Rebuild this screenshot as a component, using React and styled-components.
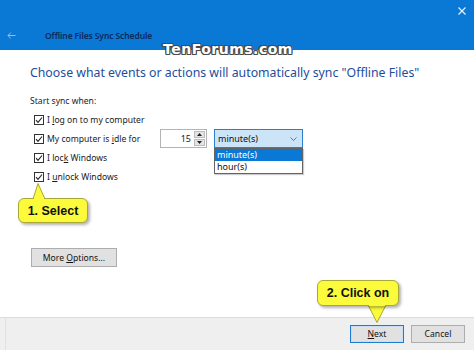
import React from "react";
import styled, { createGlobalStyle } from "styled-components";

const Global = createGlobalStyle`
  html, body { margin: 0; padding: 0; background: #fff; }
  body { font-family: "Noto Sans", "Open Sans", sans-serif; }
`;

const Frame = styled.div`
  position: relative;
  width: 474px;
  height: 350px;
  overflow: hidden;
  display: flex;
  flex-direction: column;
  background: #fff;
`;

const Header = styled.header`
  height: 50px;
  background: #0a78d5;
  display: flex;
  flex-direction: column;
  flex-shrink: 0;
`;

const TopBar = styled.div`
  height: 22px;
  display: flex;
  justify-content: flex-end;
  align-items: center;
  padding-right: 8px;
  color: #e8f2fc;
`;

const TitleBar = styled.div`
  height: 26px;
  display: flex;
  align-items: center;
  padding-left: 7px;
  gap: 29px;
`;

const Title = styled.span`
  font-size: 8.5px;
  font-weight: 600;
  color: #0c2a5e;
  letter-spacing: -0.1px;
`;

const Watermark = styled.div`
  position: absolute;
  left: 163px;
  top: 41px;
  font-family: "DejaVu Sans", sans-serif;
  font-weight: bold;
  font-size: 14px;
  letter-spacing: 0.5px;
  color: #fff;
  text-shadow: -1px -1px 0 #4a4a4a, 1px -1px 0 #4a4a4a, -1px 1px 0 #4a4a4a,
    1px 1px 0 #4a4a4a, 0 1px 0 #4a4a4a, 0 -1px 0 #4a4a4a, 1px 0 0 #4a4a4a,
    -1px 0 0 #4a4a4a;
`;

const Body = styled.main`
  flex: 1;
  padding: 15px 0 0 30px;
  display: flex;
  flex-direction: column;
  align-items: flex-start;
`;

const Heading = styled.h1`
  margin: 0;
  font-size: 12.3px;
  line-height: 16px;
  font-weight: 400;
  color: #1d4d9e;
  white-space: nowrap;
`;

const Label = styled.div`
  margin-top: 14px;
  font-size: 8.6px;
  line-height: 12px;
  color: #1a1a1a;
`;

const Options = styled.div`
  margin-top: 3px;
  padding-left: 4px;
  display: flex;
  flex-direction: column;
`;

const Row = styled.div`
  height: 19px;
  display: flex;
  align-items: center;
  font-size: 8.6px;
  color: #1a1a1a;
`;

const Box = styled.span`
  width: 8px;
  height: 8px;
  border: 1px solid #333;
  background: #fff;
  display: inline-flex;
  align-items: center;
  justify-content: center;
  margin-right: 3px;
  flex-shrink: 0;
`;

const RowText = styled.span`
  width: ${(p) => (p.$w ? `${p.$w}px` : "auto")};
  white-space: nowrap;
`;

const Spinner = styled.div`
  width: 47px;
  height: 19px;
  display: flex;
  border: 1px solid #b4b4b4;
  box-sizing: border-box;
  background: #fff;
`;

const SpinValue = styled.div`
  flex: 1;
  display: flex;
  align-items: center;
  justify-content: flex-end;
  padding-right: 3px;
  font-size: 9px;
`;

const SpinButtons = styled.div`
  width: 11px;
  display: flex;
  flex-direction: column;
  gap: 1px;
  padding: 1px 1px 1px 0;
`;

const SpinBtn = styled.div`
  flex: 1;
  background: #e4e4e4;
  border: 1px solid #bcbcbc;
  display: flex;
  align-items: center;
  justify-content: center;
`;

const DropWrap = styled.div`
  position: relative;
  margin-left: 7px;
`;

const Dropdown = styled.div`
  width: 89px;
  height: 19px;
  box-sizing: border-box;
  border: 1px solid #2a7fd0;
  background: #cce4f7;
  display: flex;
  align-items: center;
  justify-content: space-between;
  padding: 0 5px 0 3px;
  font-size: 9px;
  color: #111;
`;

const DropList = styled.div`
  position: absolute;
  top: 19px;
  left: 0;
  width: 89px;
  box-sizing: border-box;
  border: 1px solid #646464;
  background: #fff;
  box-shadow: 1px 1px 1px rgba(0, 0, 0, 0.2);
`;

const DropItem = styled.div`
  height: 12px;
  line-height: 12px;
  padding-left: 2px;
  font-size: 9px;
  background: ${(p) => (p.$sel ? "#0a78d5" : "#fff")};
  color: ${(p) => (p.$sel ? "#fff" : "#111")};
`;

const WinButton = styled.button`
  box-sizing: border-box;
  height: ${(p) => p.$h || 19}px;
  width: ${(p) => p.$w}px;
  padding: 0;
  font-family: "Noto Sans", sans-serif;
  font-size: 8.6px;
  color: #111;
  background: #e1e1e1;
  border: 1px solid ${(p) => (p.$primary ? "#1f7ad3" : "#adadad")};
  box-shadow: ${(p) => (p.$primary ? "inset 0 0 0 1px #c9def5" : "none")};
`;

const MoreBtn = styled(WinButton)`
  margin-top: 62px;
  margin-left: 1px;
`;

const Footer = styled.footer`
  height: 33px;
  box-sizing: border-box;
  flex-shrink: 0;
  background: #efefef;
  border-top: 1px solid #dcdcdc;
  display: flex;
  justify-content: flex-end;
  align-items: flex-start;
  gap: 7px;
  padding: 7px 9px 0 0;
  position: relative;
`;

const EdgeMark = styled.div`
  position: absolute;
  left: 5px;
  top: 0;
  bottom: 0;
  width: 1px;
  background: #e2e2e2;
`;

const Callout = styled.div`
  position: absolute;
  left: ${(p) => p.$x}px;
  top: ${(p) => p.$y}px;
  width: ${(p) => p.$w}px;
  height: ${(p) => p.$h}px;
  box-sizing: border-box;
  background: #fbfb3c;
  border: 1px solid #a8a83a;
  border-radius: 6px;
  box-shadow: 2px 2px 3px rgba(0, 0, 0, 0.3);
  display: flex;
  align-items: center;
  justify-content: center;
  font-family: "Liberation Sans", Arial, sans-serif;
  font-weight: bold;
  font-size: 12.5px;
  color: #111;
`;

const Tail = styled.svg`
  position: absolute;
  left: ${(p) => p.$x}px;
  top: ${(p) => p.$y}px;
  overflow: visible;
`;

const Check = () => (
  <svg width="8" height="8" viewBox="0 0 8 8">
    <path d="M1 4.2 L3 6.3 L7 1.5" fill="none" stroke="#222" strokeWidth="1.1" />
  </svg>
);

const CheckRow = ({ children, w, extra }) => (
  <Row>
    <Box>
      <Check />
    </Box>
    <RowText $w={w}>{children}</RowText>
    {extra}
  </Row>
);

export default function App() {
  return (
    <>
      <Global />
      <Frame>
        <Header>
          <TopBar>
            <svg width="8" height="8" viewBox="0 0 8 8">
              <path d="M0.5 0.5 L7.5 7.5 M7.5 0.5 L0.5 7.5" stroke="#eef5fd" strokeWidth="1.1" />
            </svg>
          </TopBar>
          <TitleBar>
            <svg width="9" height="7" viewBox="0 0 9 7">
              <path d="M8.5 3.5 H1 M3.8 0.6 L0.9 3.5 L3.8 6.4" fill="none" stroke="#9dbde2" strokeWidth="1" />
            </svg>
            <Title>Offline Files Sync Schedule</Title>
          </TitleBar>
        </Header>
        <Watermark>TenForums.com</Watermark>
        <Body>
          <Heading>Choose what events or actions will automatically sync "Offline Files"</Heading>
          <Label>Start sync when:</Label>
          <Options>
            <CheckRow>
              I <u>l</u>og on to my computer
            </CheckRow>
            <CheckRow
              w={113}
              extra={
                <>
                  <Spinner>
                    <SpinValue>15</SpinValue>
                    <SpinButtons>
                      <SpinBtn>
                        <svg width="5" height="3" viewBox="0 0 5 3">
                          <path d="M0 3 L2.5 0 L5 3Z" fill="#222" />
                        </svg>
                      </SpinBtn>
                      <SpinBtn>
                        <svg width="5" height="3" viewBox="0 0 5 3">
                          <path d="M0 0 L2.5 3 L5 0Z" fill="#222" />
                        </svg>
                      </SpinBtn>
                    </SpinButtons>
                  </Spinner>
                  <DropWrap>
                    <Dropdown>
                      <span>minute(s)</span>
                      <svg width="7" height="4" viewBox="0 0 7 4">
                        <path d="M0.5 0.5 L3.5 3.5 L6.5 0.5" fill="none" stroke="#666" strokeWidth="0.9" />
                      </svg>
                    </Dropdown>
                    <DropList>
                      <DropItem $sel>minute(s)</DropItem>
                      <DropItem>hour(s)</DropItem>
                    </DropList>
                  </DropWrap>
                </>
              }
            >
              My computer is <u>i</u>dle for
            </CheckRow>
            <CheckRow>
              I loc<u>k</u> Windows
            </CheckRow>
            <CheckRow>
              I <u>u</u>nlock Windows
            </CheckRow>
          </Options>
          <MoreBtn $w={86}>
            More <u>O</u>ptions...
          </MoreBtn>
        </Body>
        <Footer>
          <EdgeMark />
          <WinButton $w={54} $h={18} $primary>
            <u>N</u>ext
          </WinButton>
          <WinButton $w={54} $h={18}>
            Cancel
          </WinButton>
        </Footer>

        <Tail $x={30} $y={183} width="18" height="17" viewBox="0 0 18 17">
          <path d="M3 16 L8 0.5 L15 16 Z" fill="#fbfb3c" stroke="#a8a83a" strokeWidth="1" />
        </Tail>
        <Callout $x={18} $y={198} $w={70} $h={25}>
          1. Select
        </Callout>
        <Tail $x={366} $y={304} width="22" height="20" viewBox="0 0 22 20">
          <path d="M2 1 L11 18.5 L20 1 Z" fill="#fbfb3c" stroke="#a8a83a" strokeWidth="1" />
        </Tail>
        <Callout $x={317} $y={280} $w={82} $h={26}>
          2. Click on
        </Callout>
        <Tail $x={366} $y={304} width="22" height="4" viewBox="0 0 22 4">
          <rect x="3" y="0" width="16" height="2" fill="#fbfb3c" />
        </Tail>
        <Tail $x={30} $y={196} width="18" height="4" viewBox="0 0 18 4">
          <rect x="4" y="1" width="10" height="3" fill="#fbfb3c" />
        </Tail>
      </Frame>
    </>
  );
}
